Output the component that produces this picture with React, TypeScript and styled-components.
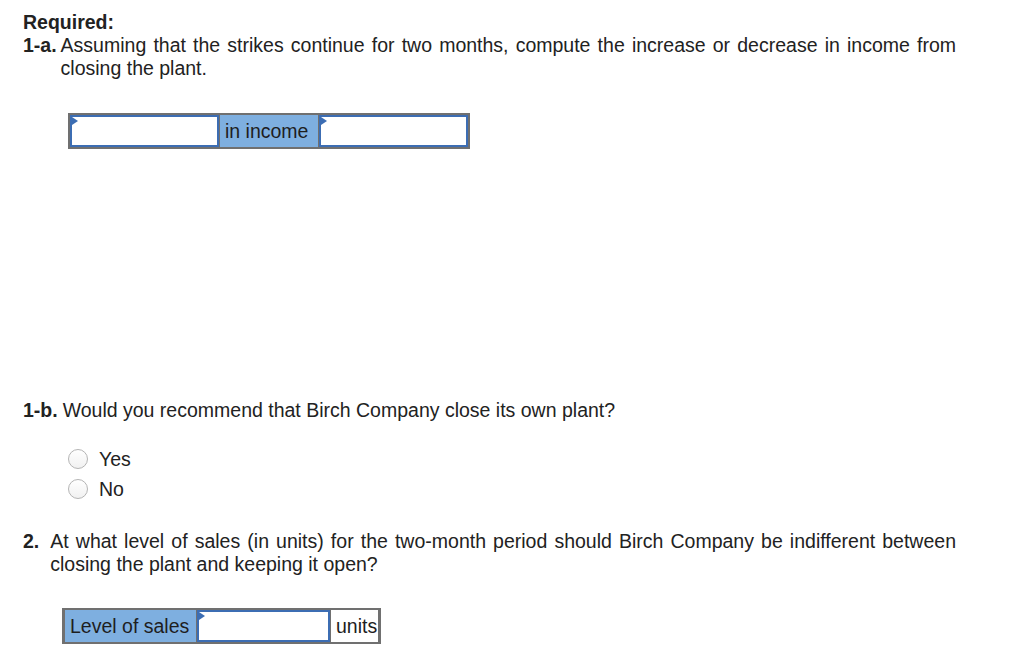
import React from "react";
import styled, { createGlobalStyle } from "styled-components";

const Global = createGlobalStyle`
  html, body { margin: 0; padding: 0; background: #ffffff; }
  body { font-family: "Liberation Sans", Arial, Helvetica, sans-serif; color: #222222; }
`;

const Page = styled.div`
  padding: 11px 0 0 23px;
  width: 933px;
  font-size: 19.5px;
  line-height: 23px;
`;

const Heading = styled.div`
  font-weight: bold;
`;

const Item = styled.div<{ $top: number }>`
  display: flex;
  margin-top: ${(p) => p.$top}px;
`;

const Label = styled.div<{ $gap: number }>`
  font-weight: bold;
  flex: none;
  margin-right: ${(p) => p.$gap}px;
`;

const Body = styled.div`
  flex: 1;
  text-align: justify;
`;

const AnswerTable = styled.div<{ $left: number; $top: number }>`
  display: inline-flex;
  margin-left: ${(p) => p.$left}px;
  margin-top: ${(p) => p.$top}px;
  border: 1px solid #707070;
`;

const Wrap = styled.div``;

const InputCell = styled.div<{ $w: number }>`
  position: relative;
  width: ${(p) => p.$w}px;
  box-sizing: border-box;
  border: 2px solid #3c6db3;
  background: #ffffff;
  &::before {
    content: "";
    position: absolute;
    left: 0;
    top: 0;
    border-top: 4px solid transparent;
    border-bottom: 4px solid transparent;
    border-left: 6px solid #3c6db3;
  }
`;

const Field = styled.input`
  border: none;
  outline: none;
  width: 100%;
  height: 100%;
  box-sizing: border-box;
  background: transparent;
  padding: 0;
`;

const TextCell = styled.div<{ $w: number; $blue?: boolean }>`
  width: ${(p) => p.$w}px;
  box-sizing: border-box;
  padding: 0 0 0 5px;
  display: flex;
  align-items: center;
  background: ${(p) => (p.$blue ? "#7eafe0" : "#ffffff")};
  border-left: 1px solid #707070;
  border-right: 1px solid #707070;
  font-size: 19.5px;
  color: #1e1e1e;
  white-space: nowrap;
`;

const Row = styled.div<{ $h: number }>`
  display: flex;
  height: ${(p) => p.$h}px;
  border: 1px solid #707070;
`;

const Choices = styled.div`
  margin: 22px 0 0 45px;
`;

const Choice = styled.label`
  display: flex;
  align-items: center;
  height: 30px;
`;

const Radio = styled.input`
  appearance: none;
  -webkit-appearance: none;
  margin: 0 11px 0 0;
  width: 20px;
  height: 20px;
  border-radius: 50%;
  border: 1px solid #b4b4b4;
  background: linear-gradient(#ffffff, #f1f1f1);
  box-sizing: border-box;
`;

export default function App() {
  return (
    <>
      <Global />
      <Page>
        <Heading>Required:</Heading>
        <Item $top={0}>
          <Label $gap={4}>1-a.</Label>
          <Body>
            Assuming that the strikes continue for two months, compute the increase or decrease in income from closing the
            plant.
          </Body>
        </Item>
        <Wrap>
          <AnswerTable $left={45} $top={33}>
            <Row $h={32}>
              <InputCell $w={149}>
                <Field aria-label="amount" />
              </InputCell>
              <TextCell $w={100} $blue>
                in income
              </TextCell>
              <InputCell $w={149}>
                <Field aria-label="change" />
              </InputCell>
            </Row>
          </AnswerTable>
        </Wrap>
        <Item $top={250}>
          <Label $gap={5}>1-b.</Label>
          <Body>Would you recommend that Birch Company close its own plant?</Body>
        </Item>
        <Choices>
          <Choice>
            <Radio type="radio" name="rec" />
            Yes
          </Choice>
          <Choice>
            <Radio type="radio" name="rec" />
            No
          </Choice>
        </Choices>
        <Item $top={26}>
          <Label $gap={11}>2.</Label>
          <Body>
            At what level of sales (in units) for the two-month period should Birch Company be indifferent between closing
            the plant and keeping it open?
          </Body>
        </Item>
        <Wrap>
          <AnswerTable $left={39} $top={32}>
            <Row $h={32}>
              <TextCell $w={133} $blue>
                Level of sales
              </TextCell>
              <InputCell $w={133}>
                <Field aria-label="level" />
              </InputCell>
              <TextCell $w={49}>units</TextCell>
            </Row>
          </AnswerTable>
        </Wrap>
      </Page>
    </>
  );
}
